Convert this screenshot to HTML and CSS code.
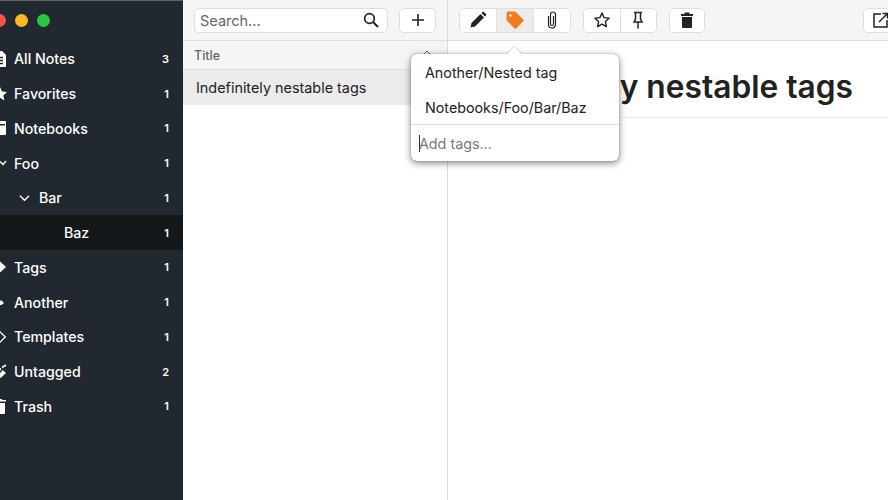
FILE: index.html
```html
<!DOCTYPE html>
<html lang="en">
<head>
<meta charset="utf-8">
<title>Notes</title>
<link rel="stylesheet" href="styles.css">
</head>
<body>
<div class="app">
  <aside class="sidebar">
    <div class="lights"><span class="light red"></span><span class="light yellow"></span><span class="light green"></span></div>
    <nav class="nav">
      <div class="row"><svg class="ico" viewBox="0 0 14 16"><path fill="#fff" d="M2 0h7l4 4v11a1 1 0 0 1-1 1H2a1 1 0 0 1-1-1V1a1 1 0 0 1 1-1z"/><path stroke="#21282f" stroke-width="1.3" d="M4 6.500h6M4 9.500h6M4 12.500h6"/></svg><span class="label">All Notes</span><span class="count">3</span></div>
      <div class="row"><svg class="ico" viewBox="0 0 14 16"><path fill="#fff" d="M7 1l2 4.600 5 .5-3.700 3.300 1.100 5L7 11.800 2.600 14.400l1.100-5L0 6.100l5-.5z"/></svg><span class="label">Favorites</span><span class="count">1</span></div>
      <div class="row"><svg class="ico" viewBox="0 0 14 16"><path fill="#fff" d="M1 1h11a1 1 0 0 1 1 1v12a1 1 0 0 1-1 1H1z"/><path fill="#21282f" d="M6 4h6v1.500H6z"/></svg><span class="label">Notebooks</span><span class="count">1</span></div>
      <div class="row"><svg class="ico" viewBox="0 0 14 16"><path fill="none" stroke="#fff" stroke-width="1.400" d="M7 6.500l3 3 3-3.500"/></svg><span class="label">Foo</span><span class="count">1</span></div>
      <div class="row"><svg class="chev" viewBox="0 0 12 8"><path fill="none" stroke="#fff" stroke-width="1.500" d="M1 1.500l5 5 5-5"/></svg><span class="label">Bar</span><span class="count">1</span></div>
      <div class="row active"><span class="label deep">Baz</span><span class="count">1</span></div>
      <div class="row"><svg class="ico" viewBox="0 0 14 16"><path fill="#fff" d="M0 2h6.500L13 8l-6.500 6H0z"/></svg><span class="label">Tags</span><span class="count">1</span></div>
      <div class="row"><svg class="ico" viewBox="0 0 14 16"><path fill="#fff" d="M7 6.500h1.500L11 9l-2.500 2H7z"/></svg><span class="label">Another</span><span class="count">1</span></div>
      <div class="row"><svg class="ico" viewBox="0 0 14 16"><path fill="none" stroke="#fff" stroke-width="1.300" d="M0 2.500h6.500L12.300 8l-5.800 5.500H0"/></svg><span class="label">Templates</span><span class="count">1</span></div>
      <div class="row"><svg class="ico" viewBox="0 0 14 16"><path fill="#fff" d="M0 3h6l7 6-5.500 5H0z"/><path stroke="#21282f" stroke-width="1.600" d="M3 13L12 2"/><path stroke="#fff" stroke-width="1.500" d="M9 3.500L13 1"/></svg><span class="label">Untagged</span><span class="count">2</span></div>
      <div class="row"><svg class="ico" viewBox="0 0 14 16"><path fill="#fff" d="M1 5h11v10a1 1 0 0 1-1 1H2a1 1 0 0 1-1-1z"/><path fill="#fff" d="M0 2h4V1h5v1h4v1.500H0z"/></svg><span class="label">Trash</span><span class="count">1</span></div>
    </nav>
  </aside>

  <section class="list">
    <div class="list-bar">
      <div class="search">
        <span class="search-text">Search...</span>
        <svg class="search-ico" viewBox="0 0 16 16"><circle cx="6.500" cy="6.500" r="4.800" fill="none" stroke="#222" stroke-width="1.700"/><path stroke="#222" stroke-width="2" d="M10 10l5 5"/></svg>
      </div>
      <button class="btn add"><svg class="plus" viewBox="0 0 14 14"><path stroke="#222" stroke-width="1.600" d="M7 1v12M1 7h12"/></svg></button>
    </div>
    <div class="list-head"><span>Title</span><svg class="caret" viewBox="0 0 8 5"><path fill="none" stroke="#666" d="M1 4l3-3 3 3"/></svg></div>
    <div class="note">Indefinitely nestable tags</div>
  </section>

  <main class="editor">
    <div class="toolbar">
      <div class="group g3">
        <button class="seg"><svg class="tool" viewBox="0 0 18 18"><path fill="#222" d="M1.500 16.500l1-4.500L11.500 3l3.500 3.500-9 9zM12.500 2l1-1a1 1 0 0 1 1.400 0l2.100 2.100a1 1 0 0 1 0 1.400l-1 1z"/></svg></button>
        <button class="seg on"><svg class="tool" viewBox="0 0 18 18"><path fill="#f27a22" d="M.500 2A1.500 1.500 0 0 1 2 .500h6.500a2 2 0 0 1 1.400.6l7.300 7.300a1.500 1.500 0 0 1 0 2.100l-6.800 6.800a1.500 1.500 0 0 1-2.100 0L1.100 9.900A2 2 0 0 1 .500 8.500z"/><circle cx="4.500" cy="4.500" r="1.300" fill="#e9ecee"/></svg></button>
        <button class="seg"><svg class="tool" viewBox="0 0 18 18"><path fill="none" stroke="#222" stroke-width="1.200" d="M5.500 5v8.500a3.500 3.500 0 0 0 7 0V3.500a2.500 2.500 0 0 0-5 0V13a1.500 1.500 0 0 0 3 0V5"/></svg></button>
      </div>
      <div class="group g2">
        <button class="seg"><svg class="tool" viewBox="0 0 18 18"><path fill="none" stroke="#222" stroke-width="1.400" stroke-linejoin="round" d="M9 2l2.100 4.600 5 .6-3.700 3.400 1 5L9 13.100l-4.400 2.500 1-5L1.900 7.200l5-.6z"/></svg></button>
        <button class="seg"><svg class="tool" viewBox="0 0 18 18"><path fill="none" stroke="#222" stroke-width="1.500" d="M5 1.500h8M6.500 1.500v6.500L5 11h8l-1.500-3V1.500M9 11v6.500"/></svg></button>
      </div>
      <div class="group g1">
        <button class="seg"><svg class="tool" viewBox="0 0 18 18"><path fill="#222" d="M3 3h3.500V1.500h5V3H15v2H3zM4 6h10v10a1 1 0 0 1-1 1H5a1 1 0 0 1-1-1z"/></svg></button>
      </div>
      <div class="spacer"></div>
      <div class="group g1 edge">
        <button class="seg"><svg class="tool" viewBox="0 0 18 18"><path fill="none" stroke="#222" stroke-width="1.500" d="M9 3H2v13h13V9M7 11l8-8M10.500 2.500H15.500V7.500"/></svg></button>
      </div>
    </div>
    <header class="doc-head"><h1 class="doc-title">Indefinitely nestable tags</h1></header>
  </main>
</div>

<div class="popover">
  <div class="arrow"></div>
  <div class="tag">Another/Nested tag</div>
  <div class="tag">Notebooks/Foo/Bar/Baz</div>
  <div class="add-tags"><span class="cursor"></span>Add tags...</div>
</div>
</body>
</html>
```
FILE: styles.css
```css
* { box-sizing: border-box; }
html, body { margin: 0; height: 100%; overflow: hidden; }
body { font-family: Inter, "Liberation Sans", sans-serif; color: #222; background: #fff; }
.app { display: flex; width: 888px; height: 500px; }

.sidebar { width: 183px; flex: none; background: #21282f; color: #fff; overflow: hidden; box-shadow: inset 0 1px 0 #5d6266; }
.lights { display: flex; gap: 9px; height: 41.600px; padding: 14px 0 0; margin-left: -7px; }
.light { width: 13px; height: 13px; border-radius: 50%; }
.red { background: #f5544d; }
.yellow { background: #fab726; }
.green { background: #29c73f; }
.nav { display: flex; flex-direction: column; }
.row { display: flex; align-items: center; height: 34.750px; padding-right: 14px; font-size: 14.200px; font-weight: 500; }
.row.active { background: #14181b; }
.ico { width: 14px; height: 16px; margin-left: -7px; margin-right: 7px; flex: none; }
.chev { width: 11px; height: 8px; margin-left: 19px; margin-right: 9px; flex: none; }
.label { flex: 1; }
.label.deep { padding-left: 64px; }
.count { font-size: 11px; font-weight: 600; }

.list { width: 265px; flex: none; border-right: 1px solid #dcdcdc; display: flex; flex-direction: column; }
.list-bar { display: flex; align-items: center; gap: 11px; height: 41px; padding: 0 11px; background: #f5f5f5; border-bottom: 1px solid #dedede; }
.search { flex: 1; height: 25px; display: flex; align-items: center; justify-content: space-between; padding: 0 8px 0 5px; background: #fff; border: 1px solid #dfdfdf; border-radius: 5px; }
.search-text { font-size: 14.500px; color: #666; }
.search-ico { width: 16px; height: 16px; }
.btn { height: 25px; padding: 0; background: #fff; border: 1px solid #dfdfdf; border-radius: 5px; display: flex; align-items: center; justify-content: center; }
.add { width: 37px; }
.plus { width: 14px; height: 14px; }
.list-head { height: 29px; display: flex; align-items: center; justify-content: space-between; padding: 0 16px 0 11px; background: #f5f5f5; border-bottom: 1px solid #dedede; font-size: 12.500px; font-weight: 500; color: #666; }
.caret { width: 8px; height: 5px; margin-top: -5px; }
.note { height: 35px; display: flex; align-items: center; padding-left: 13px; background: #ebebeb; font-size: 14.400px; color: #222; }

.editor { flex: 1; min-width: 0; display: flex; flex-direction: column; }
.toolbar { display: flex; align-items: center; gap: 12px; height: 41px; padding-left: 11px; background: #f5f5f5; border-bottom: 1px solid #dedede; }
.group { display: flex; height: 25px; background: #fff; border: 1px solid #dfdfdf; border-radius: 5px; overflow: hidden; flex: none; }
.g3 { width: 112px; }
.g2 { width: 74px; }
.g1 { width: 36px; }
.edge { margin-right: -11px; }
.seg { flex: 1; height: 100%; padding: 0; background: #fff; border: 0; border-right: 1px solid #dfdfdf; display: flex; align-items: center; justify-content: center; }
.seg:last-child { border-right: 0; }
.seg.on { background: #ececec; }
.tool { width: 18px; height: 18px; }
.spacer { flex: 1; }
.doc-head { height: 77px; border-bottom: 1px solid #eeeeee; display: flex; justify-content: flex-end; padding: 0 35px 0 0; }
.doc-title { margin: 27px 0 0; font-size: 31.700px; line-height: 38px; font-weight: 600; color: #222; white-space: nowrap; }

.popover { position: absolute; left: 411px; top: 54px; width: 208px; height: 107px; background: #fff; border-radius: 6px; box-shadow: 0 0 1px rgba(0,0,0,.5), 0 2px 7px rgba(0,0,0,.5); display: flex; flex-direction: column; }
.arrow { position: absolute; left: 98px; top: -5px; width: 11px; height: 11px; background: #fff; transform: rotate(45deg); box-shadow: -1px -1px 1px rgba(0,0,0,.12); }
.tag { position: relative; top: 1px; height: 35px; display: flex; align-items: center; padding-left: 14px; font-size: 14.300px; color: #222; }
.add-tags { flex: 1; display: flex; align-items: center; padding-left: 8px; border-top: 1px solid #dedede; font-size: 14.300px; color: #777; }
.cursor { width: 1px; height: 17px; margin-right: -1px; background: #333; }
```
